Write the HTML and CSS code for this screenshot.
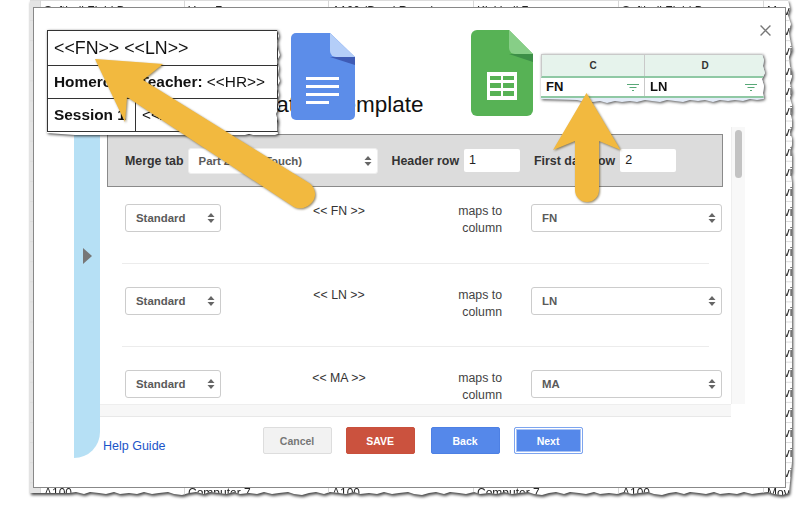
FILE: index.html
```html
<!DOCTYPE html>
<html lang="en">
<head>
<meta charset="utf-8">
<title>Template</title>
<link rel="stylesheet" href="styles.css">
</head>
<body>
<div class="sheet-shadow">
  <div class="sheet">
    <div class="cell"></div><div class="cell">Softball Field D</div><div class="cell">Year 7</div><div class="cell">A100 (Band Room)</div><div class="cell">Kickball 7</div><div class="cell">Softball Field D</div><div class="cell">Movi</div>
    <div class="cell last">Movi</div><div class="cell last">Movi</div><div class="cell last">Movi</div><div class="cell last">Movi</div><div class="cell last">Movi</div><div class="cell last">Movi</div><div class="cell last">Movi</div><div class="cell last">Movi</div>
    <div class="cell last">Movi</div><div class="cell last">Movi</div><div class="cell last">Movi</div><div class="cell last">Movi</div><div class="cell last">Movi</div><div class="cell last">Movi</div><div class="cell last">Movi</div><div class="cell last">Movi</div>
    <div class="cell last">Movi</div><div class="cell last">Movi</div><div class="cell last">Movi</div><div class="cell last">Movi</div><div class="cell last">Movi</div><div class="cell last">Movi</div><div class="cell last">Movi</div>
    <div class="cell"></div><div class="cell">A100</div><div class="cell">Computer 7</div><div class="cell">A100</div><div class="cell">Computer 7</div><div class="cell">A100</div><div class="cell">Movi</div>
  </div>
</div>

<main class="dialog">
  <header class="head">
    <h1 class="title">Create a Template</h1>
  </header>
  <svg class="close" viewBox="0 0 10 10" width="11" height="11" aria-label="Close"><path d="M0.5 0.5 9.5 9.5M9.5 0.5 0.5 9.5"/></svg>
  <div class="main">
    <aside class="strip"><span class="strip-arrow"></span></aside>
    <div class="content">
      <div class="scroll-area">
        <div class="panel">
          <div class="bar">
            <label class="bar-label">Merge tab</label>
            <div class="select select-tab"><span>Part 2 (First Touch)</span><svg class="spin" viewBox="0 0 8 10" width="8" height="10"><path d="M4 0 7.500 4H.5ZM4 10 .5 6h7Z"/></svg></div>
            <label class="bar-label bar-next">Header row</label>
            <div class="input">1</div>
            <label class="bar-label bar-next">First data row</label>
            <div class="input">2</div>
          </div>
          <div class="rows">
            <div class="row">
              <div class="select"><span>Standard</span><svg class="spin" viewBox="0 0 8 10" width="8" height="10"><path d="M4 0 7.500 4H.5ZM4 10 .5 6h7Z"/></svg></div>
              <div class="tag">&lt;&lt; FN &gt;&gt;</div>
              <div class="maps">maps to<br>column</div>
              <div class="select"><span>FN</span><svg class="spin" viewBox="0 0 8 10" width="8" height="10"><path d="M4 0 7.500 4H.5ZM4 10 .5 6h7Z"/></svg></div>
            </div>
            <div class="sep"></div>
            <div class="row">
              <div class="select"><span>Standard</span><svg class="spin" viewBox="0 0 8 10" width="8" height="10"><path d="M4 0 7.500 4H.5ZM4 10 .5 6h7Z"/></svg></div>
              <div class="tag">&lt;&lt; LN &gt;&gt;</div>
              <div class="maps">maps to<br>column</div>
              <div class="select"><span>LN</span><svg class="spin" viewBox="0 0 8 10" width="8" height="10"><path d="M4 0 7.500 4H.5ZM4 10 .5 6h7Z"/></svg></div>
            </div>
            <div class="sep"></div>
            <div class="row">
              <div class="select"><span>Standard</span><svg class="spin" viewBox="0 0 8 10" width="8" height="10"><path d="M4 0 7.500 4H.5ZM4 10 .5 6h7Z"/></svg></div>
              <div class="tag">&lt;&lt; MA &gt;&gt;</div>
              <div class="maps">maps to<br>column</div>
              <div class="select"><span>MA</span><svg class="spin" viewBox="0 0 8 10" width="8" height="10"><path d="M4 0 7.500 4H.5ZM4 10 .5 6h7Z"/></svg></div>
            </div>
          </div>
        </div>
        <div class="track"><div class="thumb"></div></div>
      </div>
      <div class="hbar"></div>
      <footer class="footer">
        <a class="help">Help Guide</a>
        <div class="buttons">
          <button class="btn btn-cancel">Cancel</button>
          <button class="btn btn-save">SAVE</button>
          <button class="btn btn-blue btn-back">Back</button>
          <button class="btn btn-blue btn-next">Next</button>
        </div>
      </footer>
    </div>
  </div>
</main>

<div class="doc-shadow">
  <div class="doc-snip">
    <div class="doc-row doc-name">&lt;&lt;FN&gt;&gt; &lt;&lt;LN&gt;&gt;</div>
    <div class="doc-row doc-home"><b>Homeroom Teacher:</b> &lt;&lt;HR&gt;&gt;</div>
    <div class="doc-row doc-session"><b class="doc-s1">Session 1</b><span class="doc-s2">&lt;&lt;A1&gt;&gt;</span></div>
  </div>
</div>

<svg class="doc-icon" viewBox="0 0 64 87" width="64" height="87" aria-hidden="true">
  <path fill="#5c8de9" d="M5 0H39L64 24V82a5 5 0 0 1-5 5H5a5 5 0 0 1-5-5V5a5 5 0 0 1 5-5Z"/>
  <path fill="#3e5bb5" d="M39 24 64 32V24Z"/>
  <path fill="#b4cef8" d="M39 0 64 24H45a6 6 0 0 1-6-6Z"/>
  <path fill="#fff" d="M15 44H48V47H15ZM15 52H48V55H15ZM15 60H48V63H15ZM15 68H38V71H15Z"/>
</svg>

<svg class="sheets-icon" viewBox="0 0 62 86" width="62" height="86" aria-hidden="true">
  <path fill="#57b255" d="M6 0H38L62 24V80a6 6 0 0 1-6 6H6a6 6 0 0 1-6-6V6a6 6 0 0 1 6-6Z"/>
  <path fill="#3d8f47" d="M38 24 62 32V24Z"/>
  <path fill="#87ce87" d="M38 0 62 24H44a6 6 0 0 1-6-6Z"/>
  <path fill="#fff" fill-rule="evenodd" d="M16 42H46V70H16ZM19 46V50H30V46ZM32 46V50H43V46ZM19 53V58H30V53ZM32 53V58H43V53ZM19 61V66H30V61ZM32 61V66H43V61Z"/>
</svg>

<div class="cols-shadow">
  <div class="cols-snip">
    <div class="cols-head"><div class="col-c">C</div><div class="col-d">D</div></div>
    <div class="cols-row">
      <div class="col-c">FN<svg class="funnel" viewBox="0 0 12 7" width="12" height="7"><path d="M0 .5H12M2.500 3.500H9.500M5 6.500H7"/></svg></div>
      <div class="col-d">LN<svg class="funnel" viewBox="0 0 12 7" width="12" height="7"><path d="M0 .5H12M2.500 3.500H9.500M5 6.500H7"/></svg></div>
    </div>
  </div>
</div>

<svg class="arrows" viewBox="0 0 800 511" width="800" height="511" aria-hidden="true">
  <path d="M95 59 163 64 143 80 309 183C315 187 317 195 313 201 308 208 300 210 294 207L127 97 125 122Z"/>
  <path d="M586.500 93 620.500 150 599 141V190A12 12 0 0 1 575 190V141L553 150Z"/>
</svg>
</body>
</html>
```

FILE: styles.css
```css
* { box-sizing: border-box; }
html, body { margin: 0; padding: 0; height: 100%; background: #fff; overflow: hidden; }
body { width: 800px; height: 511px; position: relative; font-family: "Liberation Sans", Arial, sans-serif; color: #333; }

/* torn spreadsheet behind the dialog */
.sheet-shadow { position: absolute; left: 28px; top: 0; width: 768px; height: 505px; filter: drop-shadow(1px 2px 1.5px rgba(0,0,0,.75)); }
.sheet {
  width: 764px; height: 497px; overflow: hidden; background-color: #fff;
  background-image:
    linear-gradient(#dcdcdc 1px, transparent 1px),
    linear-gradient(90deg, #e4e4e4 12px, transparent 12px);
  background-size: 100% 20.1px, 100% 100%;
  display: grid; grid-template-columns: 12px 144px 144px 145px 145px 145px 29px; grid-auto-rows: 20.1px;
  font-size: 12px; color: #222;
  clip-path: path("M2 0H760l2 8-2 7 3 9-2 8 1 7 2 10-3 8 1 9 3 8-3 9 2 8-2 7 3 10-2 7 2 9-3 8 3 9-2 8 1 7 2 9-3 9 1 8 3 7-3 10 2 8-2 7 3 9-2 8 2 9-3 8 3 8-2 9 1 7 2 9-3 9 1 8 3 7-3 10 2 8-2 7 3 9-2 8 2 9-3 8 3 8-2 9 1 7 2 9-3 9 2 8-1 7L761 493l-7 2-8-1-6-2-9 1-7 1-8-2-7 2-8-1-9 1-6-2-8 2-7-1-9-1-6 2-8-2-7 1-7 2-8-1-6-2-9 1-7 1-8-2-7 2-8-1-9 1-6-2-8 2-7-1-9-1-6 2-8-2-7 1-7 2-8-1-6-2-9 1-7 1-8-2-7 2-8-1-9 1-6-2-8 2-7-1-9-1-6 2-8-2-7 1-7 2-8-1-6-2-9 1-7 1-8-2-7 2-8-1-9 1-6-2-8 2-7-1-9-1-6 2-8-2-7 1-7 2-8-1-6-2-9 1-7 1-8-2-7 2-8-1-9 1-6-2-8 2-7-1-9-1-6 2-8-2-7 1-7 2-8-1-6-2-9 1-7 1-8-2-7 2-8-1-9 1-6-2-8 2-7-1-9-1-6 2-8-2-7 1L2 493Z");
}
.cell { height: 20.1px; padding: 4px 0 0 3px; line-height: 14px; white-space: nowrap; overflow: hidden; border-left: 1px solid #d8d8d8; }
.last { grid-column: 7; }

/* dialog */
.dialog { position: absolute; left: 33px; top: 7px; width: 753px; height: 481px; background: #fff; border: 1px solid #888; display: flex; flex-direction: column; }
.head { height: 119px; display: flex; align-items: flex-end; padding: 0 0 8px 206px; flex: none; }
.title { margin: 0; font-weight: 400; font-size: 22.500px; line-height: 28px; color: #111; white-space: nowrap; }
.close { position: absolute; left: 726px; top: 17px; }
.close path { fill: none; stroke: #777; stroke-width: 1.2; }
.main { display: flex; padding-left: 40px; flex: none; }
.strip { width: 26px; height: 331px; background: #b6e0f5; border-bottom-right-radius: 26px; display: flex; flex-direction: column; align-items: flex-start; flex: none; }
.strip-arrow { margin: 121px 0 0 9px; width: 0; height: 0; border-style: solid; border-width: 8px 0 8px 9px; border-color: transparent transparent transparent #777; }
.content { width: 645px; }
.scroll-area { display: flex; height: 277px; }
.panel { width: 631px; height: 277px; overflow: hidden; }
.track { width: 14px; background: #f8f8f8; border-left: 1px solid #eee; padding: 3px 0 0 3px; }
.thumb { width: 7px; height: 48px; background: #c3c3c3; border-radius: 4px; }
.hbar { width: 631px; height: 13px; background: #f7f7f7; border-top: 1px solid #eee; border-bottom: 1px solid #e8e8e8; }

.bar { margin: 7px 8px 0 7px; height: 53px; background: #dcdcdc; border: 1px solid #8a8a8a; display: flex; align-items: center; padding-left: 17px; gap: 4px; }
.bar-label { font-size: 12.400px; font-weight: 700; color: #333; white-space: nowrap; }
.bar-next { margin-left: 10px; }
.select { height: 28px; background: #fff; border: 1px solid #ccc; border-radius: 3px; display: flex; align-items: center; justify-content: space-between; padding: 0 5px 0 10px; font-size: 11.400px; font-weight: 700; color: #5a5a5a; }
.select-tab { width: 190px; height: 26px; border-color: #eee; }
.spin { fill: #666; flex: none; }
.input { width: 56px; height: 23px; margin-left: 1px; background: #fff; border-radius: 2px; font-size: 12.500px; line-height: 23px; padding-left: 5px; color: #222; }

.rows { padding: 17px 9px 0 25px; }
.row { display: grid; grid-template-columns: 96px 236px 45px 220px; height: 59px; padding-bottom: 31px; }
.row > .select:last-child { margin-left: 29px; width: 191px; }
.tag { font-size: 12.300px; line-height: 17px; text-align: center; margin-top: -1px; color: #333; white-space: nowrap; }
.maps { font-size: 12.300px; line-height: 17px; text-align: right; margin-top: -1px; color: #444; white-space: nowrap; }
.sep + .row .tag, .sep + .row .maps { margin-top: 0; }
.sep { height: 1px; background: #ececec; margin: 0 13px 23px -3px; }

.footer { display: flex; height: 41px; }
.help { margin: 21px 0 0 3px; font-size: 12.500px; line-height: 16px; color: #1b55c9; }
.buttons { display: flex; align-items: flex-start; margin: 10px 0 0 97px; }
.btn { width: 69px; height: 27px; border-radius: 2px; font: 700 10.500px "Liberation Sans", Arial, sans-serif; padding: 0; }
.btn-cancel { background: #f2f2f2; border: 1px solid #ddd; color: #777; }
.btn-save { margin-left: 14px; background: #cb523e; border: 1px solid #c9503c; color: #fff; }
.btn-blue { background: #5588ea; border: 1px solid #4d80e4; color: #fff; }
.btn-back { margin-left: 16px; }
.btn-next { margin-left: 14px; box-shadow: inset 0 0 0 1px #fff, inset 0 0 0 2px #a9c3f5; border-color: #7ea5ef; }

/* pasted doc snippet */
.doc-shadow { position: absolute; left: 47px; top: 30px; width: 236px; height: 108px; filter: drop-shadow(1px 1px 1.5px rgba(0,0,0,.8)); }
.doc-snip {
  width: 233px; height: 105px; background: #fff; color: #111;
  clip-path: path("M0 0H230l2 6-2 6 1 7 2 6-3 6 2 7-1 7 2 6-3 6 2 8-2 6 2 6-3 7 2 7-1 7 1 6-6 2-8-1-7 1-8-2-8 2-7-1-9 1-7-2-7 2-8-1-8 2-7-2-8 1-7-1-8 2-8-1-7 1-8-1-8 2-7-2-8 1-7-1-8 1-7 1-8-2L0 103Z");
}
.doc-row { height: 33px; border: 1px solid #333; border-top: none; padding-left: 6px; display: flex; align-items: center; white-space: pre; width: 231px; }
.doc-name { height: 36px; border-top: 1px solid #333; font-size: 17.800px; }
.doc-home { font-size: 15.400px; }
.doc-session { font-size: 15.400px; padding-left: 0; }
.doc-s1 { width: 88px; padding-left: 6px; align-self: stretch; display: flex; align-items: center; border-right: 1px solid #333; }
.doc-s2 { padding-left: 6px; }

.doc-icon { position: absolute; left: 291px; top: 33px; }
.sheets-icon { position: absolute; left: 471px; top: 30px; }

/* pasted column header snippet */
.cols-shadow { position: absolute; left: 541px; top: 54px; width: 228px; height: 54px; filter: drop-shadow(1px 1px 1.5px rgba(0,0,0,.7)); }
.cols-snip {
  width: 225px; height: 50px; background: #e3ebf7; font-weight: 700; color: #111;
  clip-path: path("M0 0H221l2 6-1 6 2 7-3 6 2 7-1 7 1 6-7 1-7-1-7 2-8-1-7 1-8-1-7 2-8-2-7 1-8-1-7 2-8-1-8-1-7 2-8-1-7-1-8 2-7-1-8 1-7-1-8 2-7-2-7 1-8 0-8-2L0 45Z");
}
.cols-head { display: flex; height: 24px; background: #e6f3ec; border: 1px solid #c9c9c9; border-bottom: 2px solid #8fc8a4; font-size: 10px; line-height: 21px; text-align: center; color: #333; }
.cols-row { display: flex; height: 20px; background: #fff; border-bottom: 2px solid #8fc8a4; font-size: 13px; line-height: 18px; color: #111; }
.col-c { width: 104px; border-right: 1px solid #c9c9c9; position: relative; }
.col-d { width: 121px; position: relative; }
.cols-row > div { padding-left: 5px; }
.funnel { position: absolute; right: 5px; top: 6px; fill: none; stroke: #58a877; stroke-width: 1; }
.col-d .funnel { right: 9px; }

/* callout arrows */
.arrows { position: absolute; left: 0; top: 0; fill: #f2b93f; filter: drop-shadow(1px 1px 1px rgba(70,50,0,.6)); }
```
